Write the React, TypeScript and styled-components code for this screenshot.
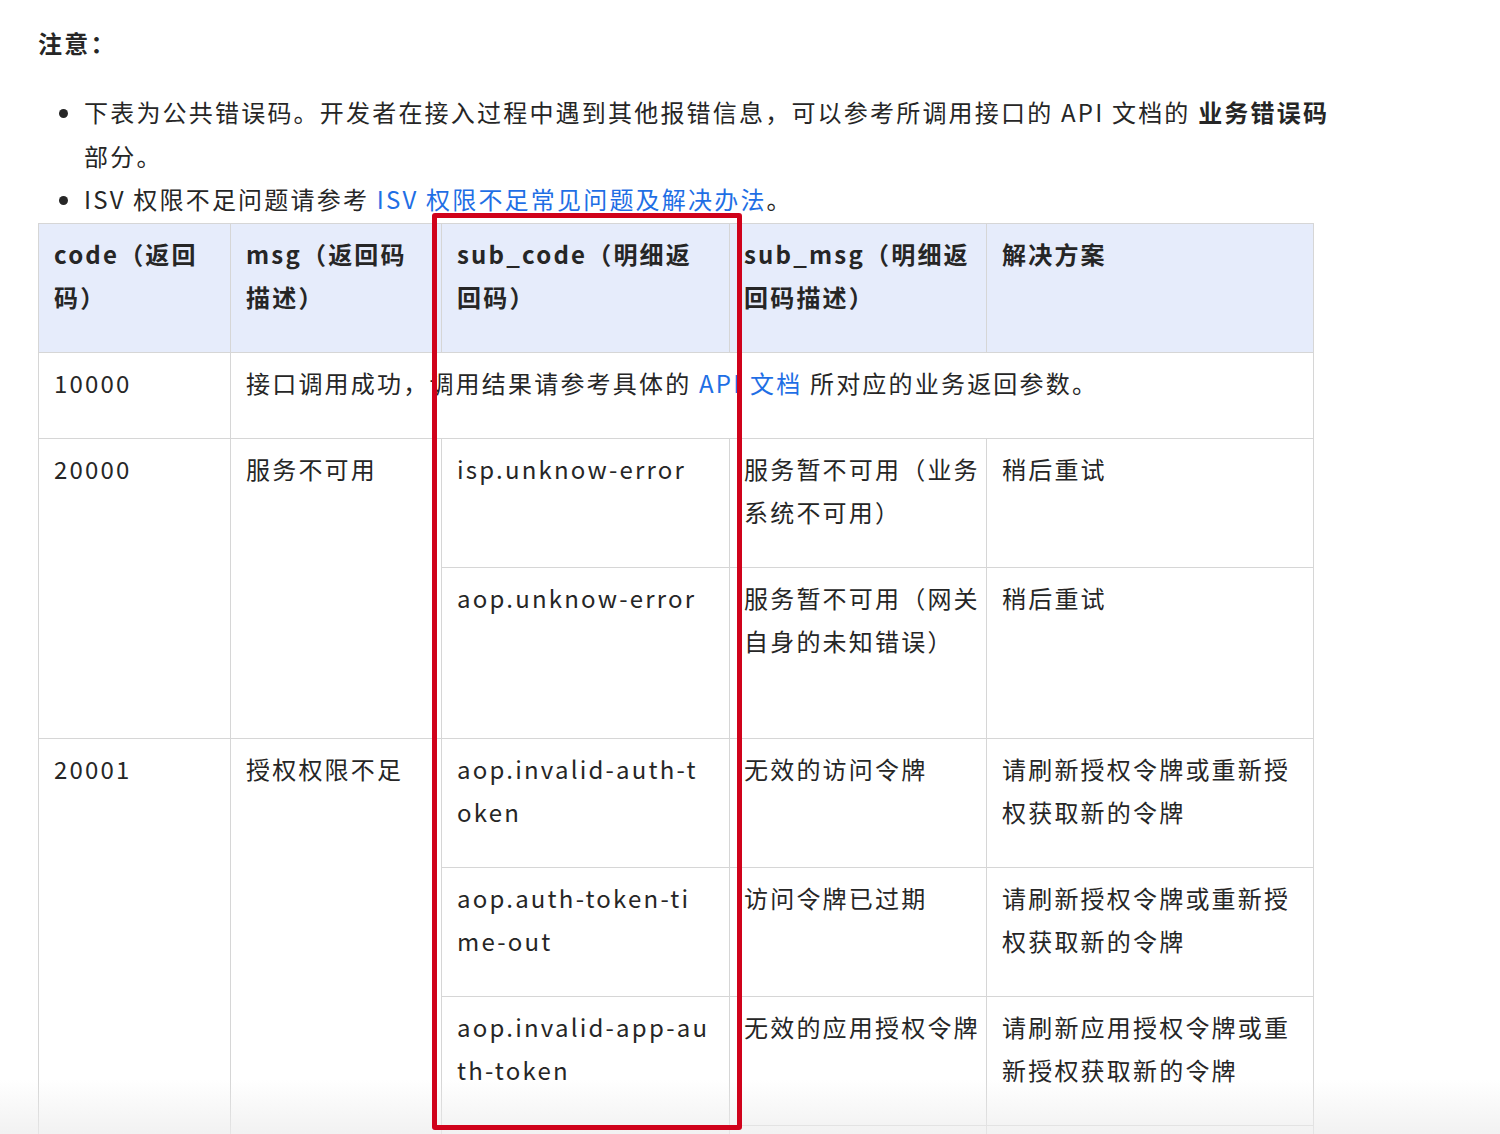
import React from "react";
import styled, { createGlobalStyle } from "styled-components";

const Global = createGlobalStyle`
  html, body { margin: 0; padding: 0; background: #fff; }
  body { height: 1134px; overflow: hidden; font-family: "Noto Sans CJK SC", "Noto Sans", sans-serif; color: #262626; }
`;

const Page = styled.div`
  position: relative;
  padding: 21px 0 0 38px;
  font-size: 24px;
  line-height: 43px;
  letter-spacing: 2.2px;
`;

const Title = styled.div`
  font-weight: 700;
`;

const List = styled.ul`
  margin: 26px 0 2px 0;
  padding-left: 46px;
  width: 1278px;
  li { line-height: 43.5px; }
`;

const Link = styled.a`
  color: #1f6fe5;
  text-decoration: none;
`;

const Table = styled.table`
  border-collapse: collapse;
  table-layout: fixed;
  width: 1275px;
`;

const Th = styled.th<{ $flush?: boolean }>`
  background: #e6ecfb;
  border: 1.5px solid #d6d6d6;
  font-weight: 700;
  text-align: left;
  vertical-align: top;
  padding: 8px ${p => (p.$flush ? "4px" : "15px")} 0 ${p => (p.$flush ? "14px" : "15px")};
  height: 120px;
`;

const Td = styled.td<{ $flush?: boolean; $h?: number }>`
  border: 1.5px solid #d6d6d6;
  vertical-align: top;
  padding: 8px ${p => (p.$flush ? "4px" : "15px")} 0 ${p => (p.$flush ? "14px" : "15px")};
  height: ${p => (p.$h ? p.$h - 8 : 120)}px;
  word-break: break-all;
`;

const Fade = styled.div`
  position: absolute;
  left: 0;
  right: 0;
  top: 1080px;
  height: 54px;
  background: linear-gradient(to bottom, rgba(240,240,240,0), rgba(236,236,236,0.7));
  pointer-events: none;
`;

const RedBox = styled.div`
  position: absolute;
  left: 432px;
  top: 213px;
  width: 300px;
  height: 907px;
  border: 5px solid #d0021b;
  border-radius: 3px;
`;

export default function App() {
  return (
    <>
      <Global />
      <Page>
        <Title>注意：</Title>
        <List>
          <li>
            下表为公共错误码。开发者在接入过程中遇到其他报错信息，可以参考所调用接口的 API 文档的 <b>业务错误码</b> 部分。
          </li>
          <li>
            ISV 权限不足问题请参考 <Link>ISV 权限不足常见问题及解决办法</Link>。
          </li>
        </List>
        <Table>
          <colgroup>
            <col style={{ width: 192 }} />
            <col style={{ width: 211 }} />
            <col style={{ width: 288 }} />
            <col style={{ width: 257 }} />
            <col style={{ width: 327 }} />
          </colgroup>
          <thead>
            <tr>
              <Th>code（返回码）</Th>
              <Th>msg（返回码描述）</Th>
              <Th>sub_code（明细返回码）</Th>
              <Th $flush>sub_msg（明细返回码描述）</Th>
              <Th>解决方案</Th>
            </tr>
          </thead>
          <tbody>
            <tr>
              <Td $h={85}>10000</Td>
              <Td $h={85} colSpan={4}>
                接口调用成功，调用结果请参考具体的 <Link>API 文档</Link> 所对应的业务返回参数。
              </Td>
            </tr>
            <tr>
              <Td rowSpan={2}>20000</Td>
              <Td rowSpan={2}>服务不可用</Td>
              <Td $h={128}>isp.unknow-error</Td>
              <Td $flush $h={128}>服务暂不可用（业务系统不可用）</Td>
              <Td $h={128}>稍后重试</Td>
            </tr>
            <tr>
              <Td $h={170}>aop.unknow-error</Td>
              <Td $flush $h={170}>服务暂不可用（网关自身的未知错误）</Td>
              <Td $h={170}>稍后重试</Td>
            </tr>
            <tr>
              <Td rowSpan={4}>20001</Td>
              <Td rowSpan={4}>授权权限不足</Td>
              <Td $h={128}>aop.invalid-auth-token</Td>
              <Td $flush $h={128}>无效的访问令牌</Td>
              <Td $h={128}>请刷新授权令牌或重新授权获取新的令牌</Td>
            </tr>
            <tr>
              <Td $h={128}>aop.auth-token-time-out</Td>
              <Td $flush $h={128}>访问令牌已过期</Td>
              <Td $h={128}>请刷新授权令牌或重新授权获取新的令牌</Td>
            </tr>
            <tr>
              <Td $h={128}>aop.invalid-app-auth-token</Td>
              <Td $flush $h={128}>无效的应用授权令牌</Td>
              <Td $h={128}>请刷新应用授权令牌或重新授权获取新的令牌</Td>
            </tr>
            <tr>
              <Td $h={128}></Td>
              <Td $flush $h={128}></Td>
              <Td $h={128}></Td>
            </tr>
          </tbody>
        </Table>
        <Fade />
        <RedBox />
      </Page>
    </>
  );
}
